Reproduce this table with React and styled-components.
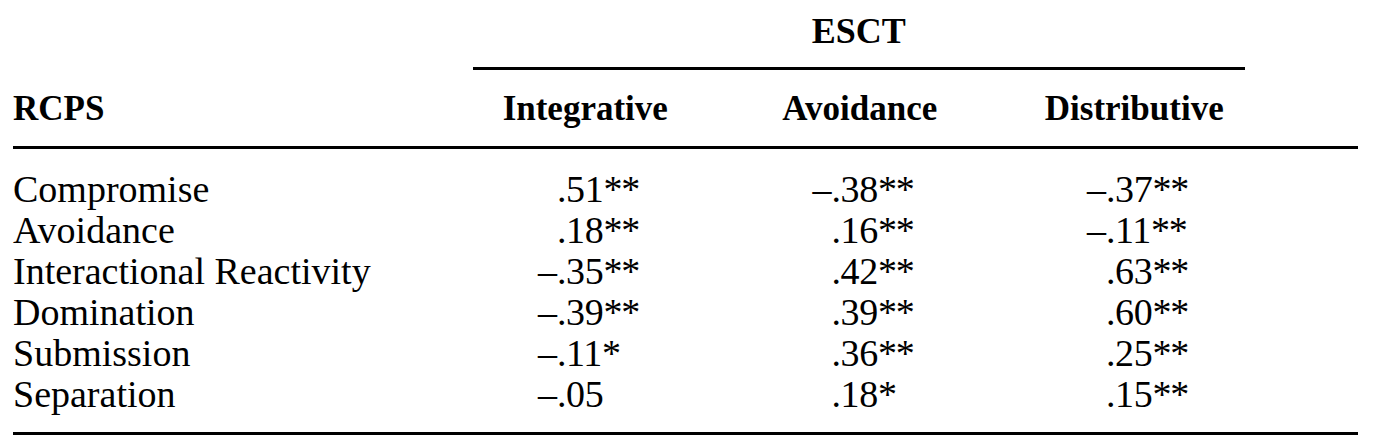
import React from 'react';
import styled, { createGlobalStyle } from 'styled-components';

const GlobalStyle = createGlobalStyle`
    html, body {
        margin: 0;
        padding: 0;
        background: #ffffff;
    }
    body {
        font-family: "Liberation Serif", "Times New Roman", serif;
        color: #000;
    }
`;

const COLUMNS = '435px repeat(3, 274.5px) 1fr';

const Table = styled.div`
    margin-left: 13px;
    width: 1345px;
    display: flex;
    flex-direction: column;
`;

const Row = styled.div`
    display: grid;
    grid-template-columns: ${COLUMNS};
    align-items: end;
`;

const GroupRow = styled(Row)`
    padding-top: 11px;
`;

const GroupHead = styled.div`
    grid-column: 2 / 5;
    margin: 0 27px 0 25px;
    padding-bottom: 16px;
    border-bottom: 3px solid #000;
    text-align: center;
    font-weight: 700;
    font-size: 36px;
    line-height: 40px;
`;

const HeadRow = styled(Row)`
    padding-top: 19px;
    padding-bottom: 17px;
    border-bottom: 3px solid #000;
`;

const HeadCell = styled.div`
    font-weight: 700;
    font-size: 35px;
    line-height: 40px;
    text-align: ${(props) => (props.left ? 'left' : 'center')};
`;

const Body = styled.div`
    padding-top: 20px;
    padding-bottom: 17px;
    border-bottom: 3px solid #000;
`;

const DataRow = styled(Row)`
    font-size: 38px;
    line-height: 41px;
`;

const Label = styled.div`
    white-space: nowrap;
`;

const Value = styled.div`
    padding-left: 90px;
    white-space: nowrap;
    letter-spacing: -0.01em;
`;

const Sign = styled.span`
    display: inline-block;
    width: 0.5em;
`;

const Stars = styled.span`
    letter-spacing: -0.03em;
`;

const headers = ['Integrative', 'Avoidance', 'Distributive'];

const rows = [
    ['Compromise', ['.51**', '-.38**', '-.37**']],
    ['Avoidance', ['.18**', '.16**', '-.11**']],
    ['Interactional Reactivity', ['-.35**', '.42**', '.63**']],
    ['Domination', ['-.39**', '.39**', '.60**']],
    ['Submission', ['-.11*', '.36**', '.25**']],
    ['Separation', ['-.05', '.18*', '.15**']],
];

const Num = ({ value }) => {
    const negative = value.startsWith('-');
    const body = negative ? value.slice(1) : value;
    const starAt = body.indexOf('*');
    const digits = starAt === -1 ? body : body.slice(0, starAt);
    const stars = starAt === -1 ? '' : body.slice(starAt);
    return (
        <Value>
            <Sign>{negative ? '–' : ''}</Sign>
            {digits}
            <Stars>{stars}</Stars>
        </Value>
    );
};

const App = () => {
    return (
        <>
            <GlobalStyle />
            <Table>
                <GroupRow>
                    <GroupHead>ESCT</GroupHead>
                </GroupRow>
                <HeadRow>
                    <HeadCell left>RCPS</HeadCell>
                    {headers.map((h) => (
                        <HeadCell key={h}>{h}</HeadCell>
                    ))}
                </HeadRow>
                <Body>
                    {rows.map(([label, values]) => (
                        <DataRow key={label}>
                            <Label>{label}</Label>
                            {values.map((v, i) => (
                                <Num key={i} value={v} />
                            ))}
                        </DataRow>
                    ))}
                </Body>
            </Table>
        </>
    );
};

export default App;
